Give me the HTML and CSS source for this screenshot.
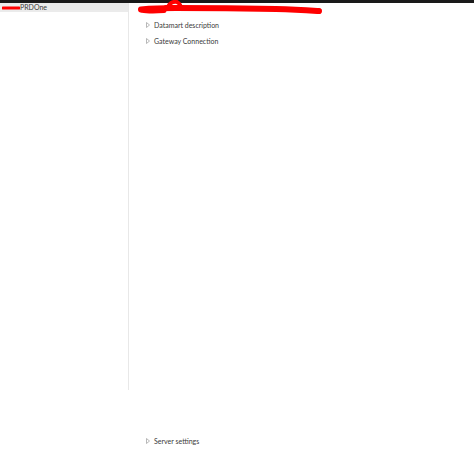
FILE: index.html
```html
<!DOCTYPE html>
<html>
<head>
<meta charset="utf-8">
<link rel="stylesheet" href="styles.css">
</head>
<body>
<div class="topbar"></div>
<div class="layout">
  <aside class="sidebar">
    <div class="side-item selected">
      <svg class="side-redact" width="18" height="6" viewBox="0 0 18 6"><path d="M1 3 L17 3" stroke="#ff0000" stroke-width="3" stroke-linecap="round"/></svg>
      <span class="side-label">PRDOne</span>
    </div>
  </aside>
  <main class="main">
    <div class="header"></div>
    <div class="node"><svg class="tri" width="4" height="6" viewBox="0 0 4 6"><path d="M0.5 0.5 L3.5 3 L0.5 5.5 Z" fill="none" stroke="#a6a6a6" stroke-width="0.8"/></svg><span class="label">Datamart description</span></div>
    <div class="node"><svg class="tri" width="4" height="6" viewBox="0 0 4 6"><path d="M0.5 0.5 L3.5 3 L0.5 5.5 Z" fill="none" stroke="#a6a6a6" stroke-width="0.8"/></svg><span class="label">Gateway Connection</span></div>
    <div class="node footer-node"><svg class="tri" width="4" height="6" viewBox="0 0 4 6"><path d="M0.5 0.5 L3.5 3 L0.5 5.5 Z" fill="none" stroke="#a6a6a6" stroke-width="0.8"/></svg><span class="label">Server settings</span></div>
  </main>
</div>
<svg class="redact" width="200" height="16" viewBox="0 0 200 16">
  <path d="M5 9.5 C 20 8, 30 8, 40 8 C 70 8, 110 8.5, 140 9 C 160 9.5, 175 10.5, 183 11" stroke="#ff0000" stroke-width="6" fill="none" stroke-linecap="round"/>
  <path d="M6 10 C 12 11.5, 20 11, 28 10.5" stroke="#ff0000" stroke-width="5" fill="none" stroke-linecap="round"/>
  <path d="M32 7 C 34 2.5, 38 1.5, 41 2 C 44 3.5, 45 6, 44 8" stroke="#ff0000" stroke-width="4" fill="none" stroke-linecap="round"/>
  <path d="M30 7.5 L 46 7.5" stroke="#ff0000" stroke-width="5" fill="none" stroke-linecap="round"/>
</svg>
</body>
</html>
```
FILE: styles.css
```css
html, body {
  margin: 0;
  padding: 0;
  background: #ffffff;
  font-family: "Lato", "Noto Sans", sans-serif;
  color: #3a3a3a;
}
body {
  position: relative;
  width: 474px;
  height: 476px;
  overflow: hidden;
}
.topbar {
  height: 3px;
  background: #1a1a1a;
}
.layout {
  display: flex;
  height: 473px;
}
.sidebar {
  width: 128px;
  height: 387px;
  border-right: 1px solid #e8e8e8;
  flex-shrink: 0;
}
.side-item {
  height: 9px;
  display: flex;
  align-items: center;
  padding-left: 2px;
}
.side-item.selected {
  background: #ebebeb;
}
.side-redact {
  display: block;
}
.side-label {
  font-size: 7px;
  line-height: 9px;
  color: #3a3a3a;
}
.main {
  flex: 1;
  display: flex;
  flex-direction: column;
}
.header {
  height: 14px;
}
.node {
  height: 16px;
  display: flex;
  align-items: center;
  padding-left: 17px;
}
.tri {
  display: block;
  margin-right: 4px;
}
.label {
  font-size: 7px;
  line-height: 16px;
  color: #3a3a3a;
}
.footer-node {
  margin-top: auto;
  margin-bottom: 27px;
}
.redact {
  position: absolute;
  left: 136px;
  top: 0;
}
```
